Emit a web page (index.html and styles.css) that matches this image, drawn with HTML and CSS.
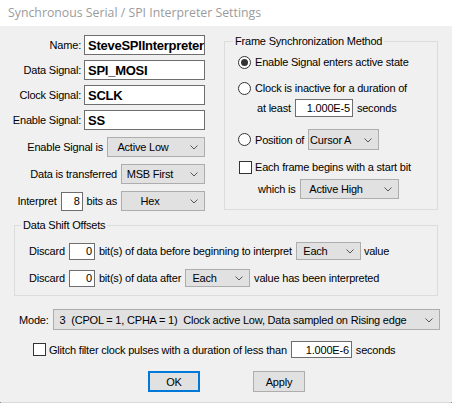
FILE: index.html
```html
<!DOCTYPE html>
<html>
<head>
<meta charset="utf-8">
<link rel="stylesheet" href="styles.css">
</head>
<body>
<div class="window">
  <div class="titlebar">Synchronous Serial / SPI Interpreter Settings</div>
  <div class="body">
    <div class="top">
      <div class="left">
        <div class="field-row"><span class="lbl">Name:</span><span class="text-in">SteveSPIInterpreter</span></div>
        <div class="field-row"><span class="lbl">Data Signal:</span><span class="text-in">SPI_MOSI</span></div>
        <div class="field-row"><span class="lbl">Clock Signal:</span><span class="text-in">SCLK</span></div>
        <div class="field-row"><span class="lbl">Enable Signal:</span><span class="text-in">SS</span></div>
        <div class="combo-row"><span>Enable Signal is</span><span class="combo w98"><span class="combo-text">Active Low</span><svg class="chev" width="8" height="5" viewBox="0 0 8 5"><path d="M0.5 0.5 L4 4 L7.5 0.5" fill="none" stroke="#555" stroke-width="1"/></svg></span></div>
        <div class="combo-row"><span>Data is transferred</span><span class="combo w84"><span class="combo-text">MSB First</span><svg class="chev" width="8" height="5" viewBox="0 0 8 5"><path d="M0.5 0.5 L4 4 L7.5 0.5" fill="none" stroke="#555" stroke-width="1"/></svg></span></div>
        <div class="combo-row"><span>Interpret</span><span class="num-in w22">8</span><span>bits as</span><span class="combo w84"><span class="combo-text">Hex</span><svg class="chev" width="8" height="5" viewBox="0 0 8 5"><path d="M0.5 0.5 L4 4 L7.5 0.5" fill="none" stroke="#555" stroke-width="1"/></svg></span></div>
      </div>
      <fieldset class="group frame">
        <legend>Frame Synchronization Method</legend>
        <div class="opt-row r1"><span class="radio"><span class="dot"></span></span><span>Enable Signal enters active state</span></div>
        <div class="opt-row r2"><span class="radio"></span><span>Clock is inactive for a duration of</span></div>
        <div class="opt-row atleast"><span>at least</span><span class="num-in w58">1.000E-5</span><span>seconds</span></div>
        <div class="opt-row r3"><span class="radio"></span><span>Position of</span><span class="combo w71 h21"><span class="combo-text">Cursor A</span><svg class="chev" width="8" height="5" viewBox="0 0 8 5"><path d="M0.5 0.5 L4 4 L7.5 0.5" fill="none" stroke="#555" stroke-width="1"/></svg></span></div>
        <div class="opt-row cb"><span class="check"></span><span>Each frame begins with a start bit</span></div>
        <div class="opt-row which"><span>which is</span><span class="combo w99"><span class="combo-text">Active High</span><svg class="chev" width="8" height="5" viewBox="0 0 8 5"><path d="M0.5 0.5 L4 4 L7.5 0.5" fill="none" stroke="#555" stroke-width="1"/></svg></span></div>
      </fieldset>
    </div>
    <fieldset class="group shift">
      <legend>Data Shift Offsets</legend>
      <div class="shift-row s1"><span>Discard</span><span class="num-in w26">0</span><span>bit(s) of data before beginning to interpret</span><span class="combo w65 h18"><span class="combo-text">Each</span><svg class="chev" width="8" height="5" viewBox="0 0 8 5"><path d="M0.5 0.5 L4 4 L7.5 0.5" fill="none" stroke="#555" stroke-width="1"/></svg></span><span class="tight">value</span></div>
      <div class="shift-row s2"><span>Discard</span><span class="num-in w26">0</span><span>bit(s) of data after</span><span class="combo w65 h18"><span class="combo-text">Each</span><svg class="chev" width="8" height="5" viewBox="0 0 8 5"><path d="M0.5 0.5 L4 4 L7.5 0.5" fill="none" stroke="#555" stroke-width="1"/></svg></span><span>value has been interpreted</span></div>
    </fieldset>
    <div class="mode-row"><span>Mode:</span><span class="combo wmode h21"><span class="combo-text pre">3  (CPOL = 1, CPHA = 1)  Clock active Low, Data sampled on Rising edge</span><svg class="chev" width="8" height="5" viewBox="0 0 8 5"><path d="M0.5 0.5 L4 4 L7.5 0.5" fill="none" stroke="#555" stroke-width="1"/></svg></span></div>
    <div class="glitch-row"><span class="check"></span><span class="gl-text">Glitch filter clock pulses with a duration of less than</span><span class="num-in w61">1.000E-6</span><span>seconds</span></div>
    <div class="buttons"><span class="btn default">OK</span><span class="btn">Apply</span></div>
  </div>
  <div class="bottom-edge"></div>
</div>
</body>
</html>
```
FILE: styles.css
```css
html, body {
  margin: 0;
  padding: 0;
  background: #f0f0f0;
}
.window {
  width: 452px;
  height: 403px;
  background: #f0f0f0;
  font-family: "Liberation Sans", Arial, sans-serif;
  font-size: 11px;
  letter-spacing: -0.2px;
  color: #000;
  overflow: hidden;
  display: flex;
  flex-direction: column;
}
.body {
  flex: 1;
}
.bottom-edge {
  height: 1px;
  background: #dadada;
  border-left: 1px solid #8a8a8a;
  border-right: 1px solid #8a8a8a;
}
.titlebar {
  height: 26px;
  flex: none;
  background: #fff;
  color: #9b9b9b;
  font-family: "Open Sans", "Noto Sans", sans-serif;
  font-size: 12.3px;
  letter-spacing: 0;
  padding-left: 8px;
  display: flex;
  align-items: center;
  padding-bottom: 1px;
  box-sizing: border-box;
}
.top {
  display: flex;
  align-items: flex-start;
}
.left {
  width: 224px;
  flex: none;
  padding-top: 9px;
  display: flex;
  flex-direction: column;
}
.field-row {
  display: flex;
  align-items: center;
  height: 20px;
  margin-top: 5px;
}
.field-row:first-child { margin-top: 0; }
.lbl {
  width: 81px;
  text-align: right;
}
.text-in {
  margin-left: 3px;
  width: 121px;
  height: 20px;
  box-sizing: border-box;
  border: 1px solid #6e6e6e;
  background: #fff;
  font-weight: bold;
  font-size: 13px;
  letter-spacing: -0.25px;
  padding-left: 3px;
  display: flex;
  align-items: center;
}
.combo-row {
  display: flex;
  justify-content: flex-end;
  align-items: center;
  gap: 4px;
  width: 205px;
  height: 20px;
  margin-top: 7px;
}
.combo {
  display: flex;
  align-items: center;
  box-sizing: border-box;
  height: 20px;
  border: 1px solid #adadad;
  background: #e1e1e1;
  flex: none;
}
.combo-text {
  flex: 1;
  text-align: center;
  padding-right: 12px;
  white-space: nowrap;
}
.pre { white-space: pre; }
.chev {
  flex: none;
  margin-right: 6px;
  margin-top: 1px;
}
.w98 { width: 98px; }
.w84 { width: 84px; }
.w71 { width: 71px; }
.w99 { width: 99px; }
.w65 { width: 65px; }
.wmode { width: 387px; }
.h21 { height: 21px; }
.h18 { height: 18px; }
.num-in {
  display: flex;
  align-items: center;
  justify-content: flex-end;
  box-sizing: border-box;
  height: 18px;
  border: 1px solid #6e6e6e;
  background: #fff;
  padding-right: 2px;
  flex: none;
}
.w22 { width: 22px; height: 19px; }
.w58 { width: 58px; }
.w26 { width: 26px; height: 17px; }
.w61 { width: 61px; height: 17px; }

.group {
  margin: 0;
  border: 1px solid #dcdcdc;
  box-sizing: border-box;
  min-width: 0;
}
.group legend {
  padding: 0 2px;
  line-height: 13px;
  height: 13px;
}
.frame {
  margin-top: 9px;
  width: 214px;
  padding: 0 0 10px 8px;
}
.opt-row {
  display: flex;
  align-items: center;
  margin-left: 5px;
  gap: 4px;
}
.r1 { margin-top: 6px; height: 16px; }
.r2 { margin-top: 10px; height: 16px; }
.atleast { margin-top: 3px; height: 18px; margin-left: 24px; }
.r3 { margin-top: 12px; height: 21px; }
.cb { margin-top: 9px; height: 16px; margin-left: 6px; }
.which { margin-top: 4px; height: 20px; margin-left: 25px; }
.radio {
  width: 13px;
  height: 13px;
  box-sizing: border-box;
  border: 1px solid #333;
  border-radius: 50%;
  background: #fff;
  display: flex;
  align-items: center;
  justify-content: center;
  flex: none;
}
.dot {
  width: 7px;
  height: 7px;
  border-radius: 50%;
  background: #333;
}
.check {
  width: 13px;
  height: 13px;
  box-sizing: border-box;
  border: 1px solid #333;
  background: #fff;
  flex: none;
}
.cb .check { margin-right: -1px; }

.shift {
  margin: 8px 14px 0 14px;
  width: 424px;
  padding: 0 0 8px 6px;
}
.shift-row {
  display: flex;
  align-items: center;
  gap: 4px;
  margin-left: 8px;
  height: 18px;
}
.s1 { margin-top: 10px; }
.s2 { margin-top: 9px; }
.tight { margin-left: -1px; }

.mode-row {
  display: flex;
  align-items: center;
  gap: 4px;
  padding-left: 19px;
  margin-top: 13px;
  height: 21px;
}
.glitch-row {
  display: flex;
  align-items: center;
  gap: 4px;
  padding-left: 33px;
  margin-top: 11px;
  height: 17px;
}
.gl-text { margin-left: -1px; }
.buttons {
  display: flex;
  gap: 53px;
  padding-left: 148px;
  margin-top: 13px;
}
.btn {
  width: 52px;
  height: 21px;
  box-sizing: border-box;
  border: 1px solid #adadad;
  background: #e1e1e1;
  display: flex;
  align-items: center;
  justify-content: center;
}
.btn.default {
  border: 2px solid #0078d7;
}
```
